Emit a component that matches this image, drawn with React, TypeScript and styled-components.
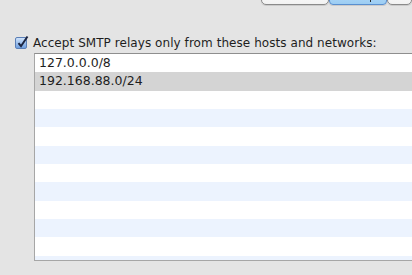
import React from 'react';
import styled, { createGlobalStyle, css } from 'styled-components';

const hosts = ['127.0.0.0/8', '192.168.88.0/24'];
const ROWS = 12;
const selectedIndex = 1;

const GlobalStyle = createGlobalStyle`
  html, body {
    margin: 0;
    padding: 0;
    background: #e4e4e4;
  }
  body {
    font-family: "DejaVu Sans", "Liberation Sans", sans-serif;
    color: #1e1e1e;
    overflow: hidden;
  }
`;

const Pane = styled.div`
  width: 412px;
  height: 275px;
  overflow: hidden;
  background: #e4e4e4;
`;

// bottom edge of the sheet's buttons, scrolled mostly out of view
const ButtonStrip = styled.div`
  height: 6px;
  overflow: hidden;
  display: flex;
  align-items: flex-end;
  padding-left: 261px;
`;

const PushButton = styled.div<{ $default?: boolean; $grow?: boolean }>`
  flex: ${props => (props.$grow ? '1' : 'none')};
  width: ${props => (props.$grow ? 'auto' : props.$default ? '58px' : '68px')};
  height: 20px;
  margin-bottom: 1px;
  box-sizing: border-box;
  border: 1px solid #8a8a8a;
  border-radius: 0 0 5px 5px;
  background: linear-gradient(#ffffff, #f2f2f2);
  box-shadow: 0 1px 1px rgba(0, 0, 0, 0.12);
  position: relative;
  ${props =>
    props.$default &&
    css`
      border-color: #5a8fcf;
      background: linear-gradient(#bfe0fa, #9ccdf3);
      border-radius: 0 0 4px 4px;
      &::after {
        content: '';
        position: absolute;
        left: 40px;
        bottom: 2px;
        width: 1px;
        height: 3px;
        background: #2a2a2a;
      }
    `}
`;

const Content = styled.div`
  padding: 30px 0 0 15px;
`;

const CheckRow = styled.label`
  display: flex;
  align-items: center;
  height: 13px;
  gap: 6px;
  font-size: 12px;
  letter-spacing: 0.06px;
`;

const CheckBox = styled.span`
  position: relative;
  width: 12px;
  height: 12px;
  box-sizing: border-box;
  border: 1px solid #5b7fb6;
  border-radius: 2px;
  background: linear-gradient(#cfe3fb, #6f9fe0);
  flex: none;
`;

const CheckMark = styled.svg`
  position: absolute;
  left: 0px;
  top: -3px;
`;

const List = styled.div`
  margin: 4px 0 0 19px;
  height: 208px;
  box-sizing: border-box;
  border: 1px solid #a6a6a6;
  border-top-color: #8e8e8e;
  border-right: none;
  background: #fff;
  overflow: hidden;
`;

const Row = styled.div<{ $selected?: boolean; $striped?: boolean }>`
  height: 18.33px;
  line-height: 18px;
  padding-left: 4px;
  font-size: 12.5px;
  white-space: nowrap;
  background: ${props => (props.$selected ? '#d4d4d4' : props.$striped ? '#ecf3fe' : '#ffffff')};
`;

export default function App() {
  return (
    <Pane>
      <GlobalStyle />
      <ButtonStrip>
        <PushButton />
        <PushButton $default />
        <PushButton $grow />
      </ButtonStrip>
      <Content>
        <CheckRow>
          <CheckBox>
            <CheckMark width="13" height="14" viewBox="0 0 13 14">
              <path d="M2.5 8.2 L5 11.2 L11.5 1.5" fill="none" stroke="#1b2440" strokeWidth="2" />
            </CheckMark>
          </CheckBox>
          Accept SMTP relays only from these hosts and networks:
        </CheckRow>
        <List>
          {Array.from({ length: ROWS }, (_, i) => (
            <Row key={i} $selected={i === selectedIndex} $striped={i % 2 === 1}>
              {hosts[i] ?? ''}
            </Row>
          ))}
        </List>
      </Content>
    </Pane>
  );
}
